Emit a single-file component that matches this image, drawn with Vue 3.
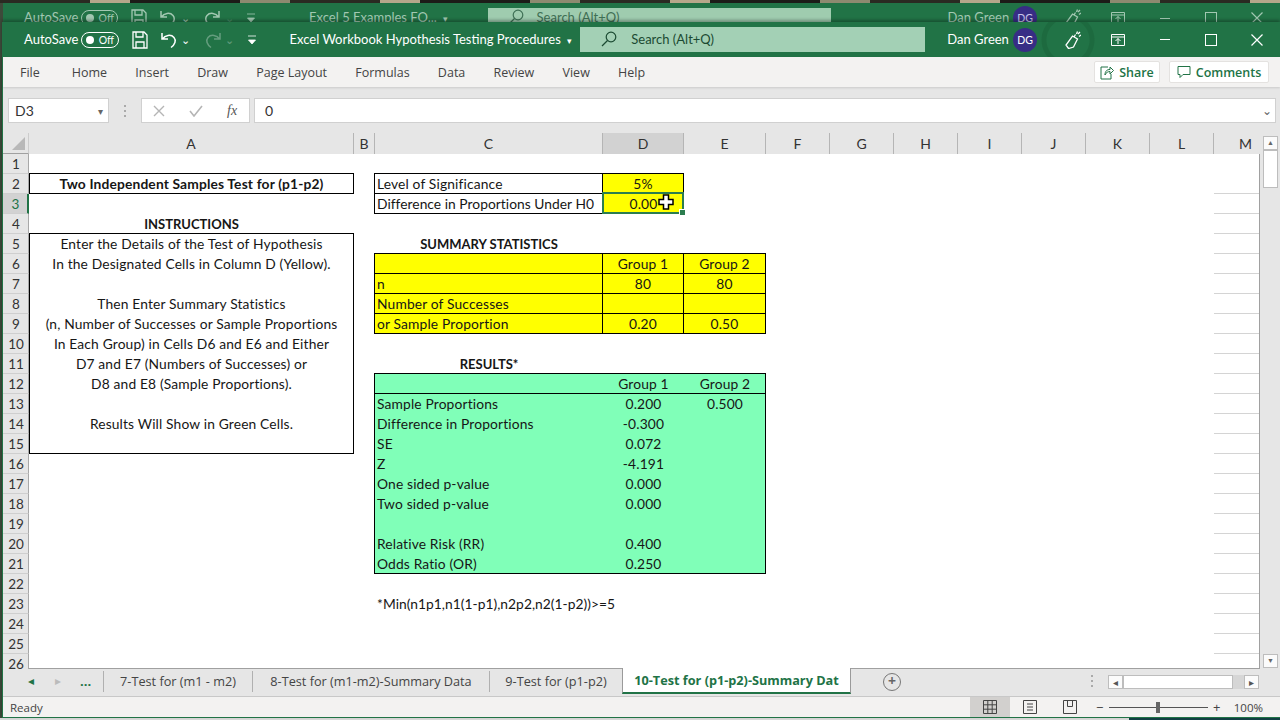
<script setup>
const columns = [
  { name: 'A', width: 325 }, { name: 'B', width: 21 }, { name: 'C', width: 228 },
  { name: 'D', width: 81, active: true }, { name: 'E', width: 82 },
  { name: 'F', width: 64 }, { name: 'G', width: 64 }, { name: 'H', width: 64 },
  { name: 'I', width: 64 }, { name: 'J', width: 64 }, { name: 'K', width: 64 },
  { name: 'L', width: 64 }, { name: 'M', width: 64 }
]
const gridColumns = columns.map(c => c.width + 'px').join(' ')
const rows = Array.from({ length: 26 }, (_, i) => i + 1)

const instructions = [
  'Enter the Details of the Test of Hypothesis',
  'In the Designated Cells in Column D (Yellow).',
  '',
  'Then Enter Summary Statistics',
  '(n, Number of Successes or Sample Proportions',
  'In Each Group) in Cells D6 and E6 and Either',
  'D7 and E7 (Numbers of Successes) or',
  'D8 and E8 (Sample Proportions).',
  '',
  'Results Will Show in Green Cells.'
]

// r, c, text, classes
const cells = [
  [2, 3, 'Level of Significance', 'box'],
  [2, 4, '5%', 'box yellow mid'],
  [3, 3, 'Difference in Proportions Under H0', 'box tight'],
  [5, 3, 'SUMMARY STATISTICS', 'bold mid caps'],
  [6, 3, '', 'box yellow'],
  [6, 4, 'Group 1', 'box yellow mid'],
  [6, 5, 'Group 2', 'box yellow mid'],
  [7, 3, 'n', 'box yellow'],
  [7, 4, '80', 'box yellow mid'],
  [7, 5, '80', 'box yellow mid'],
  [8, 3, 'Number of Successes', 'box yellow'],
  [8, 4, '', 'box yellow'],
  [8, 5, '', 'box yellow'],
  [9, 3, 'or Sample Proportion', 'box yellow'],
  [9, 4, '0.20', 'box yellow mid'],
  [9, 5, '0.50', 'box yellow mid'],
  [11, 3, 'RESULTS*', 'bold mid caps'],
  [12, 4, 'Group 1', 'mid'],
  [12, 5, 'Group 2', 'mid'],
  [13, 3, 'Sample Proportions', ''],
  [13, 4, '0.200', 'mid'],
  [13, 5, '0.500', 'mid'],
  [14, 3, 'Difference in Proportions', ''],
  [14, 4, '-0.300', 'mid'],
  [15, 3, 'SE', ''],
  [15, 4, '0.072', 'mid'],
  [16, 3, 'Z', ''],
  [16, 4, '-4.191', 'mid'],
  [17, 3, 'One sided p-value', ''],
  [17, 4, '0.000', 'mid'],
  [18, 3, 'Two sided p-value', ''],
  [18, 4, '0.000', 'mid'],
  [20, 3, 'Relative Risk (RR)', ''],
  [20, 4, '0.400', 'mid'],
  [21, 3, 'Odds Ratio (OR)', ''],
  [21, 4, '0.250', 'mid'],
  [23, 3, '*Min(n1p1,n1(1-p1),n2p2,n2(1-p2))>=5', 'spill tight']
]

const menus = ['Home', 'Insert', 'Draw', 'Page Layout', 'Formulas', 'Data', 'Review', 'View', 'Help']
const tabs = [
  { label: '7-Test for (m1 - m2)', width: 149 },
  { label: '8-Test for (m1-m2)-Summary Data', width: 237 },
  { label: '9-Test for (p1-p2)', width: 133 }
]
</script>

<template>
  <div class="screen">
    <svg class="defs" width="0" height="0">
      <symbol id="i-save" viewBox="0 0 16 18"><path d="M1 1h11l3 3v13H1zM4 1v5h7V1M4 17v-6h8v6" fill="none" stroke="currentColor" stroke-width="1.3"/></symbol>
      <symbol id="i-undo" viewBox="0 0 18 18"><path d="M2 2v6h6M2.500 8C5 4 11 3 14 6.500c2.500 3 1 7-3 10" fill="none" stroke="currentColor" stroke-width="1.500"/></symbol>
      <symbol id="i-redo" viewBox="0 0 18 18"><path d="M16 2v6h-6M15.500 8C13 4 7 3 4 6.500c-2.500 3-1 7 3 10" fill="none" stroke="currentColor" stroke-width="1.500"/></symbol>
      <symbol id="i-more" viewBox="0 0 10 12"><path d="M1 2h8M1.500 6h7L5 10z" fill="currentColor" stroke="currentColor" stroke-width=".8"/></symbol>
      <symbol id="i-search" viewBox="0 0 16 16"><circle cx="10" cy="6" r="4.800" fill="none" stroke="currentColor" stroke-width="1.200"/><path d="M6.500 9.500L1 15" stroke="currentColor" stroke-width="1.300"/></symbol>
      <symbol id="i-pen" viewBox="0 0 16 18"><path d="M7.500 5l5 3-4 8-5 1.500-2.500-3.500zM9 6l1.500-2.500M11.500 3l1-2.500M14 5.500l2-1.500M13 3l2-2" fill="none" stroke="currentColor" stroke-width="1.300"/></symbol>
      <symbol id="i-ribbon" viewBox="0 0 14 12"><path d="M.5.500h13v11H.5zM.5 3h13" fill="none" stroke="currentColor"/><path d="M7 10V4.500M4.500 7L7 4.500 9.500 7" fill="none" stroke="currentColor"/></symbol>
      <symbol id="i-close" viewBox="0 0 12 12"><path d="M.5.500l11 11M11.500.500l-11 11" fill="none" stroke="currentColor" stroke-width="1.200"/></symbol>
    </svg>

    <div class="desktop-top"></div>

    <div class="back-clip">
      <div class="titlebar back">
        <span class="autosave">AutoSave</span>
        <span class="toggle"><i></i>Off</span>
        <svg class="ic save"><use href="#i-save" /></svg>
        <svg class="ic undo"><use href="#i-undo" /></svg>
        <span class="caret">⌄</span>
        <svg class="ic redo"><use href="#i-redo" /></svg>
        <span class="caret faded">⌄</span>
        <svg class="ic more"><use href="#i-more" /></svg>
        <span class="doc">Excel 5 Examples FO... <b>▾</b></span>
        <div class="search"><svg class="ic"><use href="#i-search" /></svg>Search (Alt+Q)</div>
        <span class="user">Dan Green</span>
        <span class="avatar">DG</span>
        <svg class="ic pen"><use href="#i-pen" /></svg>
        <svg class="ic ribbon"><use href="#i-ribbon" /></svg>
        <span class="winbtn first"><i class="min"></i></span>
        <span class="winbtn"><i class="max"></i></span>
        <span class="winbtn"><svg class="ic closex"><use href="#i-close" /></svg></span>
      </div>
    </div>

    <div class="window">
      <div class="titlebar front">
        <span class="autosave">AutoSave</span>
        <span class="toggle"><i></i>Off</span>
        <svg class="ic save"><use href="#i-save" /></svg>
        <svg class="ic undo"><use href="#i-undo" /></svg>
        <span class="caret">⌄</span>
        <svg class="ic redo faded"><use href="#i-redo" /></svg>
        <span class="caret faded">⌄</span>
        <svg class="ic more"><use href="#i-more" /></svg>
        <span class="doc">Excel Workbook Hypothesis Testing Procedures <b>▾</b></span>
        <div class="search"><svg class="ic"><use href="#i-search" /></svg>Search (Alt+Q)</div>
        <span class="user">Dan Green</span>
        <span class="avatar">DG</span>
        <svg class="ic pen"><use href="#i-pen" /></svg>
        <svg class="ic ribbon"><use href="#i-ribbon" /></svg>
        <span class="winbtn first"><i class="min"></i></span>
        <span class="winbtn"><i class="max"></i></span>
        <span class="winbtn"><svg class="ic closex"><use href="#i-close" /></svg></span>
      </div>

      <div class="menubar">
        <span class="menu-file">File</span>
        <span v-for="m in menus" :key="m" class="menu-item">{{ m }}</span>
        <div class="menu-actions">
          <button class="act share">
            <svg width="14" height="15" viewBox="0 0 14 15"><path d="M8 2H1v12h10V9M5 10c0-4 2-5.500 5-5.500V2l3.500 3.500L10 9V6.500C8 6.500 6 7.500 5 10z" fill="none" stroke="currentColor"/></svg>
            Share
          </button>
          <button class="act comments">
            <svg width="14" height="14" viewBox="0 0 14 14"><path d="M1 1.500h12v8H6l-3 3v-3H1z" fill="none" stroke="currentColor"/></svg>
            Comments
          </button>
        </div>
      </div>

      <div class="formula">
        <div class="namebox">D3<span class="tri">▾</span></div>
        <span class="dots"></span>
        <div class="fx-box">
          <svg width="12" height="12" viewBox="0 0 12 12"><path d="M1 1l10 10M11 1L1 11" stroke="#b5b5b5" stroke-width="1.400"/></svg>
          <svg width="14" height="12" viewBox="0 0 14 12"><path d="M1 6l4 5 8-10" fill="none" stroke="#b5b5b5" stroke-width="1.600"/></svg>
          <span class="fx">fx</span>
        </div>
        <div class="fx-input">0<span class="chev">⌄</span></div>
      </div>

      <div class="main">
        <div class="rowcol">
          <div class="corner"><i></i></div>
          <div class="rowheads">
            <div v-for="r in rows" :key="r" class="rowhead" :class="{ on: r === 3 }">{{ r }}</div>
          </div>
        </div>

        <div class="sheet">
          <div class="colheads" :style="{ gridTemplateColumns: gridColumns }">
            <div v-for="c in columns" :key="c.name" class="colhead" :class="{ on: c.active }">{{ c.name }}</div>
          </div>
          <div class="cells" :style="{ gridTemplateColumns: gridColumns }">
            <div class="cell box first bold mid" style="grid-row: 2; grid-column: 1">Two Independent Samples Test for (p1-p2)</div>
            <div class="cell bold mid caps" style="grid-row: 4; grid-column: 1">INSTRUCTIONS</div>
            <div class="cell box first instructions" style="grid-row: 5 / 16; grid-column: 1">
              <div v-for="(line, i) in instructions" :key="i" class="line">{{ line }}</div>
            </div>
            <div class="cell box green-bg" style="grid-row: 12 / 22; grid-column: 3 / 6"></div>
            <div class="cell box green-head" style="grid-row: 12; grid-column: 3 / 6"></div>
            <div
              v-for="(c, i) in cells"
              :key="i"
              class="cell"
              :class="c[3]"
              :style="{ gridRow: c[0], gridColumn: c[1] }"
            >{{ c[2] }}</div>
            <div class="cell box yellow mid selected" style="grid-row: 3; grid-column: 4">
              0.00
              <i class="sel-frame"><i class="handle"></i></i>
              <svg class="pointer" width="16" height="16" viewBox="0 0 16 16"><path d="M5.500 1h5v4.500H15v5h-4.500V15h-5v-4.500H1v-5h4.500z" fill="#fff" stroke="#000" stroke-width="1.500"/></svg>
            </div>
            <div
              v-for="n in 24"
              :key="'g' + n"
              class="gridline"
              :style="{ gridRow: n + 1, gridColumn: 13 }"
            ></div>
          </div>
        </div>

        <div class="vscroll">
          <div class="sb-btn">▲</div>
          <div class="sb-thumb"></div>
          <div class="sb-track"></div>
          <div class="sb-btn">▼</div>
        </div>
      </div>

      <div class="tabbar">
        <div class="tabnav">
          <span class="nav-on">◂</span>
          <span class="nav-off">▸</span>
          <span class="nav-more">...</span>
        </div>
        <div v-for="t in tabs" :key="t.label" class="tab" :style="{ width: t.width + 'px' }">{{ t.label }}</div>
        <div class="tab active">10-Test for (p1-p2)-Summary Dat</div>
        <div class="tabrest">
          <span class="addsheet">+</span>
          <span class="split"></span>
          <div class="hscroll">
            <span class="hs-btn">◂</span>
            <span class="hs-thumb"></span>
            <span class="hs-track"></span>
            <span class="hs-btn">▸</span>
          </div>
        </div>
      </div>

      <div class="status">
        <span class="ready">Ready</span>
        <div class="views">
          <span class="view on">
            <svg width="14" height="14" viewBox="0 0 14 14"><path d="M.5.500h13v13H.5zM.5 4.800h13M.5 9.200h13M4.800.500v13M9.200.500v13" fill="none" stroke="#444"/></svg>
          </span>
          <span class="view">
            <svg width="14" height="14" viewBox="0 0 14 14"><path d="M.5.500h13v13H.5zM4 4h6M4 7h6M4 10h6" fill="none" stroke="#444"/></svg>
          </span>
          <span class="view">
            <svg width="14" height="14" viewBox="0 0 14 14"><path d="M.5.500h13v13H.5zM4.500.500v6h5v-6" fill="none" stroke="#444"/></svg>
          </span>
        </div>
        <div class="zoomer">
          <span class="z-sign">−</span>
          <div class="z-line"><i></i></div>
          <span class="z-sign">+</span>
        </div>
        <span class="pct">100%</span>
      </div>
    </div>

    <div class="desktop-bottom"></div>
  </div>
</template>

<style>
html, body {
  margin: 0;
  padding: 0;
  background: #333;
  overflow: hidden;
}
</style>

<style scoped>
.screen {
  width: 1280px;
  height: 720px;
  display: flex;
  flex-direction: column;
  overflow: hidden;
  background: #3d4a3a;
  font-family: "Open Sans", sans-serif;
  position: relative;
}
.defs { position: absolute; }
.desktop-top {
  height: 3px;
  background: repeating-linear-gradient(90deg, #2a2a22 0 90px, #b5a78a 90px 130px, #1c1c18 130px 240px, #8d8a70 240px 290px);
}
.back-clip {
  height: 19px;
  margin-left: 3px;
  overflow: hidden;
  background: #217346;
}
.window {
  height: 696px;
  margin-left: 2px;
  border-left: 1px solid #217346;
  display: flex;
  flex-direction: column;
  box-shadow: 0 -2px 3px rgba(0, 0, 0, .3);
  position: relative;
}
.desktop-bottom {
  height: 2px;
  background: linear-gradient(90deg, #d8d8d8 0 1129px, #123f44 1129px);
}

/* title bar */
.titlebar {
  height: 35px;
  flex: none;
  display: flex;
  align-items: center;
  color: #fff;
  background: #217346;
  font-family: Lato, sans-serif;
  font-size: 13px;
  white-space: nowrap;
}
.titlebar.front {
  background: radial-gradient(circle at 1065px 18px, transparent 21px, #1d6a3f 22px, #1d6a3f 26px, transparent 27px), #217346;
}
.ic { display: block; color: #fff; flex: none; }
.faded { opacity: .3; }
.autosave { margin-left: 21px; margin-bottom: 2px; width: 57px; }
.toggle {
  width: 38px;
  height: 16px;
  box-sizing: border-box;
  border: 1.500px solid #fff;
  border-radius: 9px;
  display: flex;
  align-items: center;
  font-size: 10.500px;
  padding-left: 4px;
  gap: 5px;
}
.toggle i { width: 8px; height: 8px; border-radius: 50%; background: #fff; }
.save { width: 16px; height: 18px; margin-left: 13px; }
.undo { width: 18px; height: 18px; margin-left: 12px; }
.caret { width: 10px; margin-left: 3px; font-size: 11px; line-height: 8px; text-align: center; }
.redo { width: 18px; height: 18px; margin-left: 13px; }
.more { width: 10px; height: 12px; margin-left: 12px; }
.doc { margin-left: 33px; margin-bottom: 2px; width: 292px; }
.doc b { font-size: 9px; font-weight: 400; margin-left: 3px; }
.search {
  width: 345px;
  height: 25px;
  flex: none;
  background: #a3d0b5;
  color: #1b4a32;
  display: flex;
  align-items: center;
  padding-left: 21px;
  padding-bottom: 2px;
  box-sizing: border-box;
  gap: 14px;
}
.search .ic { width: 16px; height: 16px; color: #1b4a32; }
.user { margin-left: 22px; margin-bottom: 2px; width: 66px; }
.avatar {
  width: 24px;
  height: 24px;
  border-radius: 50%;
  background: #372d85;
  font-size: 10.500px;
  display: flex;
  align-items: center;
  justify-content: center;
  flex: none;
}
.pen { width: 16px; height: 18px; margin-left: 28px; }
.ribbon { width: 14px; height: 12px; margin-left: 30px; }
.winbtn { width: 46px; flex: none; display: flex; justify-content: center; align-items: center; }
.winbtn.first { margin-left: 17px; }
.winbtn i { display: block; }
.min { width: 10px; height: 1px; background: #fff; }
.max { width: 10px; height: 10px; border: 1px solid #fff; }
.closex { width: 12px; height: 12px; }

.back { color: #a2c8b2; height: 30px; }
.back .ic { color: #a2c8b2; }
.back .doc { margin-left: 53px; width: 180px; }
.back .search { width: 343px; height: 20px; background: #9fccaf; padding-left: 20px; gap: 13px; color: #3f7055; }
.back .search .ic { color: #3f7055; }
.back .toggle, .back .max { border-color: #a2c8b2; }
.back .toggle i, .back .min { background: #a2c8b2; }
.back .user { margin-left: 117px; }
.back .avatar { color: #c9c4ea; }

/* menu */
.menubar {
  height: 30px;
  flex: none;
  background: #f3f2f1;
  display: flex;
  align-items: center;
  font-size: 12.500px;
  color: #444;
  box-shadow: 0 1px 2px rgba(0, 0, 0, .12);
  position: relative;
}
.menu-file { margin-left: 17px; margin-right: 3.800px; }
.menu-item { margin-left: 28.200px; }
.menu-actions { margin-left: auto; margin-right: 11px; display: flex; gap: 9px; }
.act {
  height: 22px;
  background: #fff;
  border: 1px solid #e4e2e0;
  border-radius: 2px;
  color: #217346;
  font: 600 12.500px "Open Sans", sans-serif;
  display: flex;
  align-items: center;
  justify-content: center;
  gap: 5px;
  padding: 0;
}
.share { width: 66px; }
.comments { width: 100px; }

/* formula bar */
.formula {
  height: 46px;
  flex: none;
  background: #e6e6e6;
  display: flex;
  align-items: flex-start;
  padding-top: 11px;
  box-sizing: border-box;
  font: 14px Lato, sans-serif;
  color: #333;
}
.namebox, .fx-box, .fx-input {
  height: 25px;
  box-sizing: border-box;
  background: #fff;
  border: 1px solid #d0d0d0;
  display: flex;
  align-items: center;
}
.namebox { width: 101px; margin-left: 5px; padding: 0 5px 0 6px; justify-content: space-between; }
.tri { font-size: 10px; color: #666; }
.dots {
  width: 2px;
  height: 12px;
  margin: 7px 15px 0;
  background: repeating-linear-gradient(#aaa 0 2px, transparent 2px 5px);
}
.fx-box { width: 109px; padding-left: 11px; gap: 24px; }
.fx { font: italic 14px "Liberation Serif", serif; color: #555; }
.fx-input { margin-left: 4px; width: 1022px; padding: 0 3px 0 10px; justify-content: space-between; }
.chev { font-size: 12px; color: #666; line-height: 8px; }

/* sheet */
.main {
  height: 536px;
  flex: none;
  display: flex;
  background: #e6e6e6;
  overflow: hidden;
}
.rowcol { width: 26px; flex: none; }
.corner {
  height: 21px;
  box-sizing: border-box;
  border-bottom: 1px solid #a0a0a0;
  border-right: 1px solid #ccc;
  position: relative;
}
.corner i {
  position: absolute;
  right: 3px;
  bottom: 3px;
  border-style: solid;
  border-width: 0 0 13px 13px;
  border-color: transparent transparent #b8b8b8;
}
.rowheads { height: 515px; overflow: hidden; }
.rowhead {
  height: 20px;
  box-sizing: border-box;
  border-bottom: 1px solid #cfcfcf;
  border-right: 1px solid #a8a8a8;
  font: 13.500px/21px Lato, sans-serif;
  color: #333;
  text-align: center;
  padding-left: 1px;
}
.rowhead.on { background: #d2d2d2; color: #217346; border-right: 2px solid #217346; }
.sheet { width: 1231px; flex: none; overflow: hidden; display: flex; flex-direction: column; }
.colheads { display: grid; height: 21px; flex: none; }
.colhead {
  box-sizing: border-box;
  border-right: 1px solid #b5b5b5;
  border-bottom: 1px solid #a0a0a0;
  font: 14px/21px Lato, sans-serif;
  color: #333;
  text-align: center;
}
.colhead.on { background: #d2d2d2; border-bottom: 2px solid #217346; }
.cells {
  flex: none;
  height: 514px;
  display: grid;
  grid-auto-rows: 20px;
  grid-template-rows: repeat(26, 20px);
  background: #fff;
  border-right: 1px solid #a0a0a0;
  border-bottom: 1px solid #a0a0a0;
  box-sizing: content-box;
  overflow: hidden;
}
.cell {
  font: 13.800px/19px Lato, sans-serif;
  letter-spacing: .15px;
  color: #161616;
  white-space: nowrap;
  padding-left: 2px;
  position: relative;
  min-width: 0;
}
.box { border: 1px solid #000; margin: -1px 0 0 -1px; }
.box.first { margin-left: 0; }
.yellow { background: #ff0; }
.mid { text-align: center; padding-left: 0; }
.bold { font-weight: 700; }
.caps { font-size: 13px; line-height: 21px; letter-spacing: 0; }
.tight { letter-spacing: .03px; }
.spill { overflow: visible; }
.green-bg { background: #80ffb8; }
.green-head { background: #80ffb8; }
.instructions { text-align: center; padding: 0; }
.line { height: 20px; }
.selected { overflow: visible; z-index: 2; padding-left: 1px; }
.sel-frame {
  position: absolute;
  inset: -2px -1px -1px -1px;
  border: 2px solid #2b7d4f;
}
.handle {
  position: absolute;
  right: -4px;
  bottom: -4px;
  width: 5px;
  height: 5px;
  background: #2b7d4f;
  border: 1px solid #fff;
}
.pointer { position: absolute; left: 55px; top: 0; }
.gridline { border-bottom: 1px solid #d4d4d4; }

/* vertical scrollbar */
.vscroll {
  width: 20px;
  flex: none;
  display: flex;
  flex-direction: column;
  padding: 3px 2px 1px 3px;
  box-sizing: border-box;
}
.sb-btn {
  height: 14px;
  flex: none;
  background: #fbfbfb;
  border: 1px solid #bdbdbd;
  box-sizing: border-box;
  font-size: 7px;
  line-height: 12px;
  text-align: center;
  color: #666;
}
.sb-thumb { height: 38px; flex: none; background: #fff; border: 1px solid #bdbdbd; box-sizing: border-box; }
.sb-track { flex: 1; }

/* tabs */
.tabbar {
  height: 27px;
  flex: none;
  display: flex;
  background: #e6e6e6;
  font-size: 12.700px;
  color: #444;
  white-space: nowrap;
}
.tabnav {
  width: 100px;
  flex: none;
  display: flex;
  align-items: center;
  box-sizing: border-box;
  height: 23px;
  font-size: 12px;
}
.nav-on { margin-left: 25px; color: #217346; }
.nav-off { margin-left: 21px; color: #bbb; }
.nav-more { margin-left: 19px; color: #217346; font-weight: 700; font-size: 13px; }
.tab {
  box-sizing: border-box;
  height: 21px;
  margin-top: 2px;
  border-left: 1px solid #b0b0b0;
  text-align: center;
  line-height: 21px;
  flex: none;
}
.tab.active {
  width: 229px;
  height: 26px;
  margin-top: -1px;
  background: #fff;
  border-left: 1px solid #9a9a9a;
  border-right: 1px solid #9a9a9a;
  border-bottom: 2px solid #217346;
  color: #217346;
  font-weight: 700;
  line-height: 25px;
  position: relative;
}
.tabrest { flex: 1; display: flex; align-items: center; height: 27px; padding-bottom: 1px; box-sizing: border-box; }
.addsheet {
  width: 16px;
  height: 16px;
  margin-left: 32px;
  border: 1.500px solid #777;
  border-radius: 50%;
  color: #666;
  font-size: 14px;
  line-height: 14px;
  font-weight: 700;
  text-align: center;
}
.split {
  width: 2px;
  height: 14px;
  margin-left: 190px;
  background: repeating-linear-gradient(#aaa 0 2px, transparent 2px 5px);
}
.hscroll { display: flex; margin-left: 15px; height: 14px; width: 151px; }
.hs-btn {
  width: 15px;
  box-sizing: border-box;
  background: #fbfbfb;
  border: 1px solid #bdbdbd;
  font-size: 10px;
  line-height: 12px;
  text-align: center;
  color: #555;
}
.hs-thumb { width: 110px; background: #fff; border: 1px solid #bdbdbd; box-sizing: border-box; }
.hs-track { width: 11px; background: #d6d6d6; }

/* status bar */
.status {
  height: 22px;
  flex: none;
  background: #f3f2f1;
  border-top: 1px solid #c8c8c8;
  border-bottom: 1px solid #217346;
  box-sizing: border-box;
  display: flex;
  align-items: center;
  font-size: 11.500px;
  color: #444;
}
.ready { margin-left: 7px; }
.views { margin-left: auto; display: flex; height: 100%; }
.view { width: 40px; display: flex; align-items: center; justify-content: center; }
.view.on { background: #d2d0ce; }
.zoomer { display: flex; align-items: center; margin-left: 5px; }
.z-sign { width: 10px; text-align: center; font-size: 13px; }
.z-line { width: 99px; height: 1px; background: #555; margin: 0 4px; position: relative; }
.z-line i { position: absolute; left: 47px; top: -5px; width: 4px; height: 11px; background: #666; }
.pct { margin: 0 17px 0 12px; }
</style>
